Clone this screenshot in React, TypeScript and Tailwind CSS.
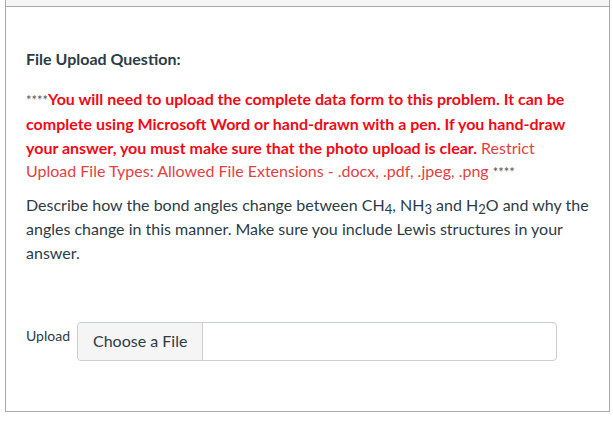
import React from "react";

export default function App() {
  return (
    <div className="w-[613px] h-[424px] bg-white" style={{ fontFamily: "Lato, 'Noto Sans', sans-serif" }}>
      <div className="ml-[5px] w-[605px] border border-t-0 border-[#a9a9a9] bg-white">
        <div className="h-[7px] bg-[#f5f5f5] border-b border-[#a9a9a9]" />
        <div className="px-[20px] pt-[40px] pb-[50px] text-[#2d3b45]">
          <p className="text-[16px] font-bold leading-[24px]">File Upload Question:</p>
          <p className="mt-[16px] text-[16px] leading-[23.4px]">
            <span className="text-[#555] text-[13px]">****</span>
            <span className="font-bold text-[#f00a16]">
              You will need to upload the complete data form to this problem. It can be complete using Microsoft Word or hand-drawn with a pen. If you hand-draw your answer, you must make sure that the photo upload is clear.
            </span>{" "}
            <span className="text-[#e3413f]">Restrict Upload File Types: Allowed File Extensions - .docx, .pdf, .jpeg, .png</span>{" "}
            <span className="text-[#555] text-[13px]">****</span>
          </p>
          <p className="mt-[8px] text-[16px] leading-[24px] text-[#2d3b45]">
            Describe how the bond angles change between CH<sub className="text-[13px]">4</sub>, NH<sub className="text-[13px]">3</sub> and H<sub className="text-[13px]">2</sub>O and why the angles change in this manner. Make sure you include Lewis structures in your answer.
          </p>
          <div className="mt-[57px] flex items-start">
            <span className="mt-[4px] w-[51px] text-[14px] leading-[20px] text-[#2d3b45]">Upload</span>
            <div className="flex h-[39px] w-[480px] border border-[#c7cdd1] rounded-[4px]">
              <button className="h-full px-[15px] bg-[#f5f5f5] border-r border-[#c7cdd1] rounded-l-[4px] text-[16px] text-[#2d3b45]">
                Choose a File
              </button>
            </div>
          </div>
        </div>
      </div>
    </div>
  );
}
